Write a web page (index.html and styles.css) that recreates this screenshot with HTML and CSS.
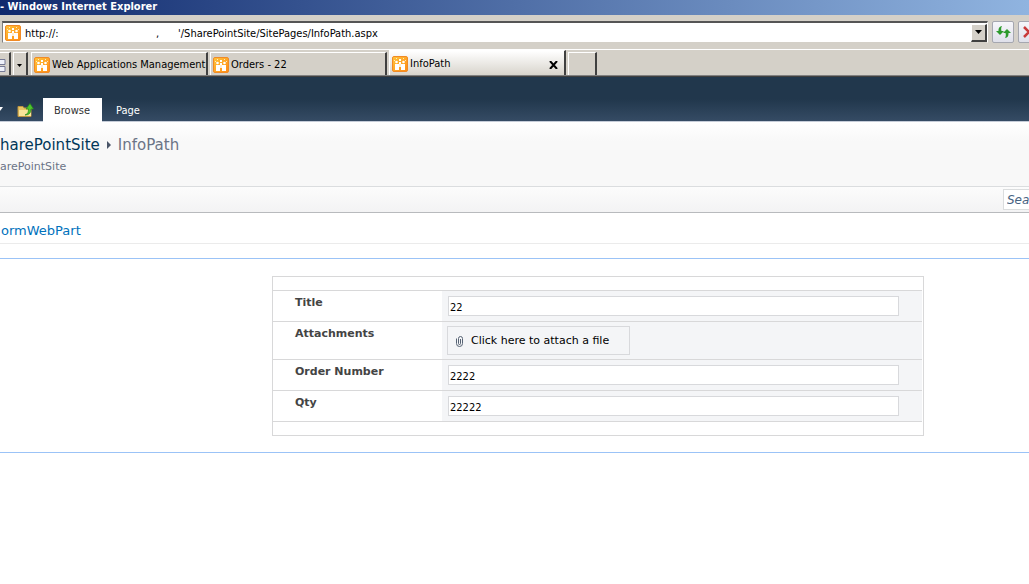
FILE: index.html
```html
<!DOCTYPE html>
<html lang="en">
<head>
<meta charset="utf-8">
<title>InfoPath</title>
<link rel="stylesheet" href="styles.css">
</head>
<body>
<svg class="defs" aria-hidden="true">
  <defs>
    <linearGradient id="orange" x1="0" y1="0" x2="1" y2="1">
      <stop offset="0" stop-color="#ffc53a"/><stop offset="1" stop-color="#ff8a14"/>
    </linearGradient>
    <symbol id="site" viewBox="0 0 16 16">
      <rect x=".5" y=".5" width="15" height="15" rx="1.5" fill="url(#orange)" stroke="#f08a26"/>
      <g fill="#fff">
        <path d="M7 3h2v2H7zM7 6h2v2H7z"/><path d="M7 8h2v3H7z" opacity=".8"/>
        <circle cx="4.500" cy="6" r="1.300"/><circle cx="11.500" cy="6" r="1.300"/>
        <path d="M3 8h4v6H3zM9 8h4v6H9z"/>
        <path d="M2 4h1v1H2zM4 2h1v1H4zM11 2h1v1h-1zM13 4h1v1h-1z" opacity=".7"/>
      </g>
    </symbol>
  </defs>
</svg>
<header class="browser">
  <div class="titlebar">- Windows Internet Explorer</div>
  <div class="address-row">
    <div class="address">
      <svg class="site-icon"><use href="#site"/></svg>
      <input class="url" type="text" aria-label="Address" value="http://:&nbsp;&nbsp;&nbsp;&nbsp;&nbsp;&nbsp;&nbsp;&nbsp;&nbsp;&nbsp;&nbsp;&nbsp;&nbsp;&nbsp;&nbsp;&nbsp;&nbsp;&nbsp;&nbsp;&nbsp;&nbsp;&nbsp;&nbsp;&nbsp;&nbsp;&nbsp;&nbsp;&nbsp;&nbsp;&nbsp;&nbsp;,&nbsp;&nbsp;&nbsp;&nbsp;&nbsp;&nbsp;'/SharePointSite/SitePages/InfoPath.aspx">
      <button class="drop" type="button" aria-label="Show address list"><svg width="7" height="4"><path d="M0 0h7L3.500 4z"/></svg></button>
    </div>
    <button class="tool" type="button" aria-label="Refresh">
      <svg width="16" height="16" viewBox="0 0 16 16"><g fill="#2c9a2c"><path d="M7 2C4 2.500 3.500 4.500 3.500 7H1l4 4 4-4H6.500C6 5 6 4 7 2z"/><path d="M10 14c3-.5 3.500-2 3.500-5H16l-4-4-4 4h2.500c.5 2 .5 3-.5 5z"/></g></svg>
    </button>
    <button class="tool stop" type="button" aria-label="Stop">
      <svg width="16" height="16" viewBox="0 0 16 16"><path d="M3 3l10 10M13 3L3 13" stroke="#c93a3a" stroke-width="2.500"/></svg>
    </button>
  </div>
  <nav class="tabs" aria-label="Browser tabs">
    <button class="tab quick" type="button" aria-label="Quick tabs"><svg width="6" height="13"><path d="M0 .5h5v5H0M0 7.500h5v5H0" fill="#eef1fa" stroke="#777b96"/></svg></button>
    <button class="tab list" type="button" aria-label="Tab list"><svg width="5" height="3"><path d="M0 0h5L2.500 3z"/></svg></button>
    <button class="tab web" type="button"><svg class="site-icon"><use href="#site"/></svg>Web Applications Management</button>
    <button class="tab orders" type="button"><svg class="site-icon"><use href="#site"/></svg>Orders - 22</button>
    <button class="tab active" type="button"><svg class="site-icon"><use href="#site"/></svg>InfoPath<svg class="close" width="9" height="8"><path d="M1 0l7 8M8 0L1 8" stroke="#000" stroke-width="2"/></svg></button>
    <button class="tab new" type="button" aria-label="New tab"></button>
  </nav>
</header>
<nav class="ribbon" aria-label="Ribbon">
  <svg class="caret" width="3" height="4"><path d="M0 0h3L0 4z" fill="#fff"/></svg>
  <button class="up" type="button" aria-label="Navigate up">
    <svg width="17" height="16" viewBox="0 0 17 16"><path d="M1 4.500h5l1 1.500h7v8.500H1z" fill="#e8c765" stroke="#bd9440"/><path d="M2 8h12v6H2z" fill="#f8e39a"/><path d="M8 13c3-1 3.500-3 3.500-6H9l4-5.500L16.500 7H14c0 4-2 6-6 6z" fill="#4fc72c" stroke="#26881d" stroke-width=".7"/></svg>
  </button>
  <a class="ribbon-tab selected" href="#">Browse</a>
  <a class="ribbon-tab" href="#">Page</a>
</nav>
<section class="page-head">
  <div class="crumbs"><a href="#">harePointSite</a><svg width="4" height="8"><path d="M0 0l4 4-4 4z" fill="#4a5568"/></svg><span>InfoPath</span></div>
  <p class="description">arePointSite</p>
</section>
<div class="search-row"><input class="search" type="text" aria-label="Search" value="Sea"></div>
<main>
  <h2 class="part-title"><a href="#">ormWebPart</a></h2>
  <div class="part-body">
    <form class="form">
      <div class="row"><label for="title">Title</label><div class="cell"><input id="title" type="text" value="22"></div></div>
      <div class="row"><label for="attach">Attachments</label><div class="cell attachment">
        <button id="attach" class="attach" type="button"><svg width="9" height="11" viewBox="0 0 9 11"><path d="M1.500 2.500v5a3 3 0 0 0 6 0v-5a2 2 0 0 0-4 0v5a1 1 0 0 0 2 0V3" fill="none" stroke="#566273"/></svg>Click here to attach a file</button></div></div>
      <div class="row"><label for="order">Order Number</label><div class="cell"><input id="order" type="text" value="2222"></div></div>
      <div class="row"><label for="qty">Qty</label><div class="cell"><input id="qty" type="text" value="22222"></div></div>
    </form>
  </div>
</main>
</body>
</html>
```
FILE: styles.css
```css
* { box-sizing: border-box; }
body {
  margin: 0;
  background: #fff;
  color: #000;
  font: 11px/14px Verdana, "DejaVu Sans", sans-serif;
  overflow-x: hidden;
}
button, input { font: inherit; color: inherit; margin: 0; padding: 0; border: 0; border-radius: 0; }
a { text-decoration: none; }
svg { display: block; flex: none; }
.defs { position: absolute; width: 0; height: 0; }

.browser {
  background: #d4d0c8;
  border-bottom: 1px solid #404040;
  font-family: Tahoma, "DejaVu Sans Condensed", sans-serif;
}
.titlebar {
  height: 15px;
  line-height: 13px;
  background: linear-gradient(90deg, #0f296d, #90b4e0);
  color: #fff;
  font-weight: bold;
  white-space: pre;
}
.address-row { display: flex; align-items: center; gap: 4px; height: 35px; padding-left: 2px; border-bottom: 1px solid #fff; overflow: hidden; }
.address {
  display: flex;
  align-items: center;
  flex: 1;
  height: 22px;
  background: #fff;
  border: 1px solid #808080;
  border-top: 2px solid #555;
  border-right-color: #fff;
  border-bottom-color: #d4d0c8;
  padding-left: 2px;
}
.site-icon { width: 16px; height: 16px; }
.url { flex: 1; min-width: 0; height: 18px; padding: 1px 0 0 4px; background: none; }
.drop {
  display: flex; align-items: center; justify-content: center;
  width: 16px; height: 18px;
  background: #d4d0c8;
  border: 1px solid #fff;
  border-right: 2px solid #404040;
  border-bottom: 2px solid #404040;
}
.tool {
  display: flex; align-items: center; justify-content: center;
  flex: none;
  width: 22px; height: 22px;
  background: linear-gradient(#f6f6fa, #dfe0ea);
  border: 1px solid #a5a7b0;
  border-radius: 2px;
}
.stop { margin-right: -11px; }

.tabs { display: flex; align-items: flex-end; gap: 2px; height: 26px; border-bottom: 1px solid #808080; }
.tab {
  display: flex; align-items: center; gap: 2px;
  height: 23px;
  background: #d4d0c8;
  border-top: 1px solid #fff;
  border-left: 1px solid #fff;
  border-right: 2px solid #404040;
  padding: 2px 0 0 2px;
  white-space: nowrap;
}
.quick { width: 11px; padding-left: 0; border-left: 0; }
.list { width: 15px; padding-left: 3px; }
.web { width: 177px; margin-left: 1px; }
.orders { width: 177px; }
.active { width: 177px; height: 25px; background: linear-gradient(#fff, #d8d4cc); }
.close { margin: 2px 6px 0 auto; }
.new { width: 29px; }

.ribbon {
  display: flex;
  align-items: flex-end;
  height: 45px;
  background: linear-gradient(#21374c 50%, #354b64);
  border-bottom: 1px solid #c5ccd8;
}
.caret { margin-bottom: 10px; }
.up { background: none; width: 17px; height: 16px; margin: 0 9px 3px 14px; }
.ribbon-tab { color: #fff; padding: 0 12px 0 14px; height: 24px; line-height: 26px; margin-bottom: -1px; font-family: Tahoma, "DejaVu Sans Condensed", sans-serif; }
.selected { background: #fff; color: #333; padding-left: 11px; }

.page-head { height: 65px; padding-top: 13px; background: linear-gradient(#fff, #f8f8f8 30%); border-bottom: 1px solid #dbdddf; }
.crumbs { display: flex; align-items: center; gap: 7px; font-size: 15px; line-height: 20px; color: #6b7486; }
.crumbs a { color: #003759; }
.description { margin: 5px 0 0; color: #6b7486; }
.search-row { display: flex; justify-content: flex-end; align-items: center; height: 26px; background: linear-gradient(#fcfcfc, #f3f3f4); border-bottom: 1px solid #b8babd; overflow: hidden; }
.search { width: 28px; height: 21px; margin-right: -2px; padding-left: 3px; border: 1px solid #dbddde; background: #fff; color: #476382; font-size: 12px; font-style: italic; }

.part-title { margin: 0; height: 31px; padding: 9px 0 0 1px; border-bottom: 1px solid #ebebeb; font-size: 13px; line-height: 18px; font-weight: normal; }
.part-title a { color: #0072bc; }
.part-body {
  display: grid;
  grid-template-columns: minmax(0, 272px) minmax(0, 652px);
  margin-top: 14px;
  padding: 17px 0 16px;
  border-top: 1px solid #9bc3f7;
  border-bottom: 1px solid #9bc3f7;
}
.form { grid-column: 2; border: 1px solid #d8d8d9; padding: 13px 1px 13px 0; }
.row { display: grid; grid-template-columns: 169px 1fr; min-height: 31px; border-top: 1px solid #d8d8d9; }
.row:last-child { min-height: 32px; border-bottom: 1px solid #d8d8d9; }
.row label { padding: 5px 0 0 22px; font-weight: bold; color: #444; }
.cell { background: #f4f5f7; padding: 5px 23px 5px 6px; }
.cell input { display: block; width: 100%; height: 20px; padding: 2px 1px 0; background: #fff; border: 1px solid #d8d9dc; font-family: Tahoma, "DejaVu Sans Condensed", sans-serif; }
.attachment { padding: 4px 5px; }
.attach { display: flex; align-items: center; gap: 7px; height: 29px; padding: 1px 20px 0 7px; background: #f4f5f7; border: 1px solid #d8d9dc; }
```
